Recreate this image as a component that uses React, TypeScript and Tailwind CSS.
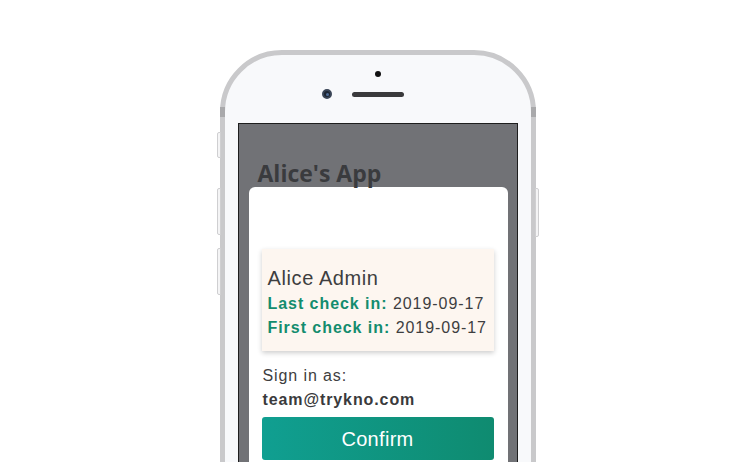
import React from "react";

export default function App() {
  return (
    <div className="w-[756px] h-[462px] overflow-hidden bg-white flex justify-center">
      <div className="relative mt-[50px] w-[316px] h-[700px]">
        {/* side buttons */}
        <div className="absolute left-[-3px] top-[82px] w-[4px] h-[26px] rounded-l-[2px] border border-[#cfcfd1] bg-[#f4f4f5]" />
        <div className="absolute left-[-3px] top-[138px] w-[4px] h-[47px] rounded-l-[2px] border border-[#cfcfd1] bg-[#f4f4f5]" />
        <div className="absolute left-[-3px] top-[198px] w-[4px] h-[47px] rounded-l-[2px] border border-[#cfcfd1] bg-[#f4f4f5]" />
        <div className="absolute right-[-3px] top-[138px] w-[4px] h-[49px] rounded-r-[2px] border border-[#cfcfd1] bg-[#f4f4f5]" />
        <div className="absolute left-0 top-[57px] w-[5px] h-[10px] bg-[#a9a9ab]" />
        <div className="absolute right-0 top-[57px] w-[5px] h-[10px] bg-[#a9a9ab]" />

        <div className="h-full rounded-t-[62px] border-[5px] border-[#c9c9cb] bg-[#f8f9fb] pl-[13px]">
          <div className="h-[68px] flex flex-col items-center pr-[13px]">
            <div className="mt-[16px] w-[6px] h-[6px] rounded-full bg-[#111]" />
            <div className="mt-[12px] flex items-center gap-[20px]">
              <div className="w-[10px] h-[10px] rounded-full bg-[#1d2633] border-[2px] border-[#3a4556] flex items-center justify-center">
                <div className="w-[3px] h-[3px] rounded-full bg-[#4f6b95]" />
              </div>
              <div className="w-[52px] h-[5px] rounded-full bg-[#3a3a3c]" />
              <div className="w-[10px] h-[10px]" />
            </div>
          </div>
          <div className="w-[280px] h-[500px] border-[1.5px] border-[#1e1e1e] bg-[#717276] px-[9.5px]">
            <div
              className="pt-[34px] pl-[9px] h-[63px] text-[23px] font-bold text-[#3a3b3e] leading-[30px]"
              style={{ fontFamily: '"Open Sans", "Noto Sans", sans-serif' }}
            >
              Alice's App
            </div>
            <div
              className="rounded-[6px] bg-white h-[400px] pl-[13px] pr-[14px] pt-[62px] text-[#3e3e40]"
              style={{ fontFamily: '"Liberation Sans", Arial, sans-serif' }}
            >
              <div className="bg-[#fdf6f0] shadow-[0_2px_5px_rgba(0,0,0,0.2)] h-[102px] pl-[6px] pt-[16px]">
                <div className="text-[20px] leading-[26px] tracking-[0.6px]">Alice Admin</div>
                <div className="text-[16px] leading-[24px] tracking-[0.95px] mt-[1px]">
                  <span className="font-bold text-[#138c6e]">Last check in:</span> 2019-09-17
                </div>
                <div className="text-[16px] leading-[24px] tracking-[0.95px]">
                  <span className="font-bold text-[#138c6e]">First check in:</span> 2019-09-17
                </div>
              </div>
              <div className="mt-[13px] text-[16px] leading-[24px] tracking-[0.9px] pl-[1px]">Sign in as:</div>
              <div className="text-[16px] leading-[24px] tracking-[0.9px] font-bold pl-[1px] text-[#3a3a3c]">team@trykno.com</div>
              <div className="mt-[5px] h-[43px] rounded-[3px] bg-gradient-to-r from-[#109f91] to-[#0f8b70] flex items-center justify-center text-white text-[20px] tracking-[0.3px]">
                Confirm
              </div>
            </div>
          </div>
        </div>
      </div>
    </div>
  );
}
